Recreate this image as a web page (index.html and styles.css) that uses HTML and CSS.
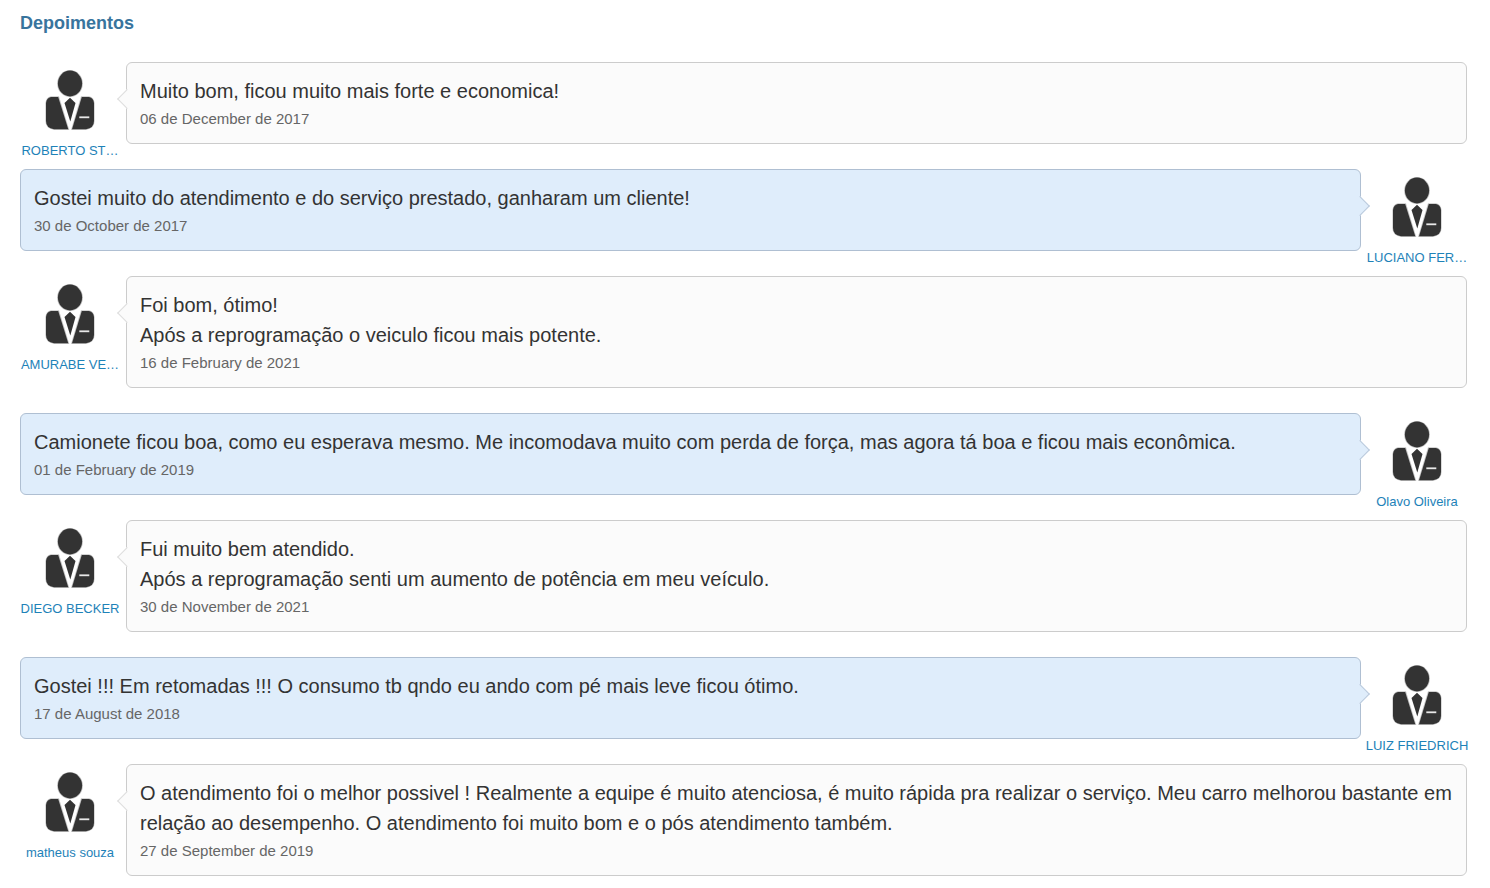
FILE: index.html
```html
<!DOCTYPE html>
<html lang="pt-br">
<head>
	<meta charset="UTF-8">
	<title>Depoimentos</title>
	<link rel="stylesheet" href="styles.css">
</head>
<body>
	<svg class="sprite" aria-hidden="true">
		<symbol id="avatar" viewBox="0 0 50 60">
			<!-- soft edge around the figure -->
			<g fill="#c4c4c4">
				<ellipse cx="25" cy="13.5" rx="12.9" ry="13.6"/>
				<path d="M6 26.300H14L24.300 59.900H9Q0.400 58.500 0.400 51V33Q1 27.300 6 26.300Z"/>
				<path d="M44 26.300H36L26 59.900H41Q49.600 58.500 49.600 51V33Q49 27.300 44 26.300Z"/>
			</g>
			<g fill="#333">
				<ellipse cx="25" cy="13.5" rx="12.1" ry="12.9"/>
				<path d="M6 27H13.200L23.300 59.300H9Q1 58 1 51V33Q1.500 28 6 27Z"/>
				<path d="M44 27H36.800L27 59.300H41Q49 58 49 51V33Q48.500 28 44 27Z"/>
				<path d="M25 27.800L30.500 33L25.300 51.500L19.500 33Z"/>
			</g>
			<path d="M34.300 47.300H44.300" stroke="#e8e8e8" stroke-width="1.800"/>
		</symbol>
	</svg>
	<h2 class="title">Depoimentos</h2>
	<ul class="list">
		<li class="item">
			<div class="user">
				<svg class="avatar" aria-hidden="true"><use href="#avatar"/></svg>
				<a class="name" href="#">ROBERTO ST…</a>
			</div>
			<div class="bubble">
				<p class="text">Muito bom, ficou muito mais forte e economica!</p>
				<p class="date">06 de December de 2017</p>
			</div>
		</li>
		<li class="item right">
			<div class="user">
				<svg class="avatar" aria-hidden="true"><use href="#avatar"/></svg>
				<a class="name" href="#">LUCIANO FER…</a>
			</div>
			<div class="bubble">
				<p class="text">Gostei muito do atendimento e do serviço prestado, ganharam um cliente!</p>
				<p class="date">30 de October de 2017</p>
			</div>
		</li>
		<li class="item">
			<div class="user">
				<svg class="avatar" aria-hidden="true"><use href="#avatar"/></svg>
				<a class="name" href="#">AMURABE VE…</a>
			</div>
			<div class="bubble">
				<p class="text">Foi bom, ótimo!<br>Após a reprogramação o veiculo ficou mais potente.</p>
				<p class="date">16 de February de 2021</p>
			</div>
		</li>
		<li class="item right">
			<div class="user">
				<svg class="avatar" aria-hidden="true"><use href="#avatar"/></svg>
				<a class="name" href="#">Olavo Oliveira</a>
			</div>
			<div class="bubble">
				<p class="text">Camionete ficou boa, como eu esperava mesmo. Me incomodava muito com perda de força, mas agora tá boa e ficou mais econômica.</p>
				<p class="date">01 de February de 2019</p>
			</div>
		</li>
		<li class="item">
			<div class="user">
				<svg class="avatar" aria-hidden="true"><use href="#avatar"/></svg>
				<a class="name" href="#">DIEGO BECKER</a>
			</div>
			<div class="bubble">
				<p class="text">Fui muito bem atendido.<br>Após a reprogramação senti um aumento de potência em meu veículo.</p>
				<p class="date">30 de November de 2021</p>
			</div>
		</li>
		<li class="item right">
			<div class="user">
				<svg class="avatar" aria-hidden="true"><use href="#avatar"/></svg>
				<a class="name" href="#">LUIZ FRIEDRICH</a>
			</div>
			<div class="bubble">
				<p class="text">Gostei !!! Em retomadas !!! O consumo tb qndo eu ando com pé mais leve ficou ótimo.</p>
				<p class="date">17 de August de 2018</p>
			</div>
		</li>
		<li class="item">
			<div class="user">
				<svg class="avatar" aria-hidden="true"><use href="#avatar"/></svg>
				<a class="name" href="#">matheus souza</a>
			</div>
			<div class="bubble">
				<p class="text">O atendimento foi o melhor possivel ! Realmente a equipe é muito atenciosa, é muito rápida pra realizar o serviço. Meu carro melhorou bastante em relação ao desempenho. O atendimento foi muito bom e o pós atendimento também.</p>
				<p class="date">27 de September de 2019</p>
			</div>
		</li>
	</ul>
</body>
</html>
```

FILE: styles.css
```css
*{
	margin: 0;
	padding: 0;
	list-style: none;
	box-sizing: border-box;
}
body{
	padding: 12px 23px 10px 20px;
	background-color: #fff;
	color: #333;
	font-family: "Liberation Sans", Arial, sans-serif;
}
.sprite{
	display: none;
}
.title{
	margin-bottom: 28px;
	font-size: 18px;
	line-height: 22px;
	color: #38749d;
}
.list{
	display: flex;
	flex-direction: column;
	gap: 25px;
}
.item{
	display: flex;
	align-items: flex-start;
	gap: 6px;
}
.right{
	flex-direction: row-reverse;
}
/* the name may hang below a short bubble, into the gap */
.user{
	flex: none;
	display: flex;
	flex-direction: column;
	align-items: center;
	gap: 11px;
	width: 100px;
	padding-top: 8px;
	margin-bottom: -25px;
}
.avatar{
	width: 50px;
	height: 60px;
	overflow: visible;
}
.name{
	font-size: 13px;
	line-height: 20px;
	white-space: nowrap;
	text-decoration: none;
	color: #1e82b8;
}
.bubble{
	position: relative;
	flex: 1;
	min-width: 0;
	padding: 13px 13px 12px;
	border: 1px solid #ccc;
	border-radius: 6px;
	background-color: #fbfbfb;
}
/* arrow pointing at the avatar */
.bubble::before{
	content: "";
	position: absolute;
	top: 29px;
	left: -7px;
	width: 13px;
	height: 13px;
	border: 1px solid #ddd;
	border-top: none;
	border-right: none;
	background-color: #fbfbfb;
	transform: rotate(45deg);
}
.right .bubble{
	border-color: #afbfd2;
	background-color: #dfedfb;
}
.right .bubble::before{
	left: auto;
	right: -7px;
	border: 1px solid #bccbdc;
	border-left: none;
	border-bottom: none;
	background-color: #dfedfb;
}
.text{
	font-size: 20px;
	line-height: 30px;
}
.date{
	font-size: 15px;
	line-height: 25px;
	color: #666;
}
```
